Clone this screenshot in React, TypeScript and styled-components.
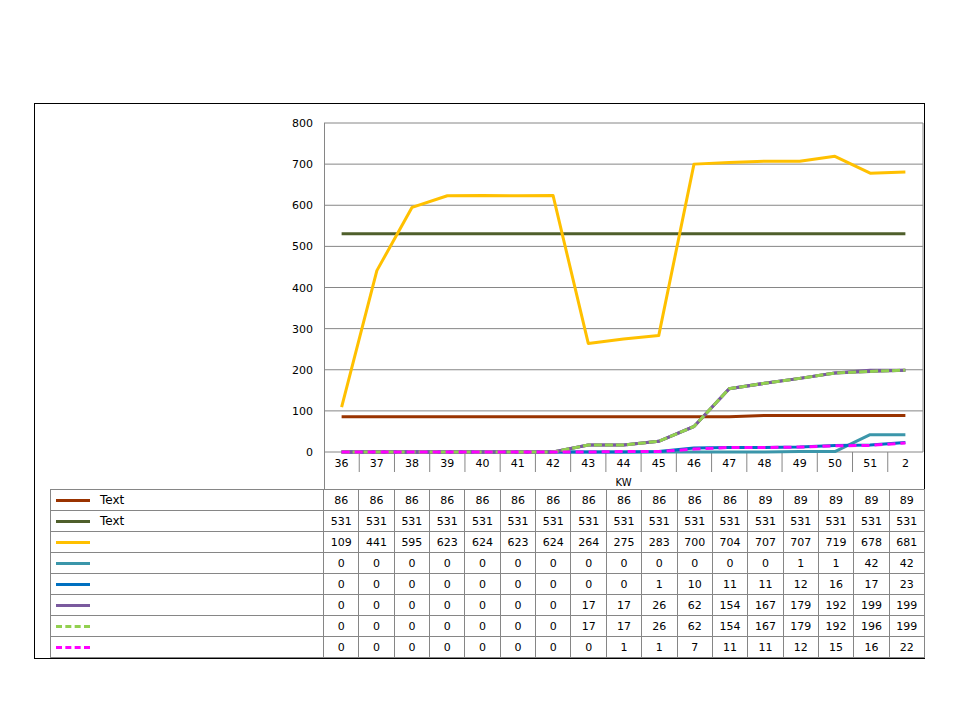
import React from "react"
import styled, { createGlobalStyle } from "styled-components"

const Global = createGlobalStyle`
  body { margin: 0; background: #fff; font-family: "DejaVu Sans", Verdana, sans-serif; }
`

const Frame = styled.div`
  margin: 103px 0 0 34px;
  width: 889px;
  height: 554px;
  border: 1px solid #000;
  display: flex;
  flex-direction: column;
`

const Table = styled.div`
  margin-left: 15px;
  width: 874px;
  display: grid;
  grid-template-columns: 273px repeat(17, 1fr);
  border-top: 1px solid #868686;
  border-left: 1px solid #868686;
`

const Cell = styled.div`
  height: 20px;
  border-right: 1px solid #868686;
  border-bottom: 1px solid #868686;
  font-size: 11px;
  display: flex;
  align-items: center;
  justify-content: center;
  color: #000;
`

const LabelCell = styled(Cell)`
  justify-content: flex-start;
  padding-left: 5px;
  gap: 10px;
  font-size: 12px;
`

const Swatch = styled.span<{ $color: string; $dashed?: boolean }>`
  width: 34px;
  height: 0;
  border-top: 3px ${(p) => (p.$dashed ? "dashed" : "solid")} ${(p) => p.$color};
`

const cats = ["36", "37", "38", "39", "40", "41", "42", "43", "44", "45", "46", "47", "48", "49", "50", "51", "2"]

const series = [
  { color: "#993300", label: "Text", data: [86, 86, 86, 86, 86, 86, 86, 86, 86, 86, 86, 86, 89, 89, 89, 89, 89] },
  { color: "#4f5f2b", label: "Text", data: Array(17).fill(531) },
  { color: "#ffc000", label: "", data: [109, 441, 595, 623, 624, 623, 624, 264, 275, 283, 700, 704, 707, 707, 719, 678, 681] },
  { color: "#3b96aa", label: "", data: [0, 0, 0, 0, 0, 0, 0, 0, 0, 0, 0, 0, 0, 1, 1, 42, 42] },
  { color: "#0070c0", label: "", data: [0, 0, 0, 0, 0, 0, 0, 0, 0, 1, 10, 11, 11, 12, 16, 17, 23] },
  { color: "#7a5a9e", label: "", data: [0, 0, 0, 0, 0, 0, 0, 17, 17, 26, 62, 154, 167, 179, 192, 199, 199] },
  { color: "#92d050", label: "", dashed: true, data: [0, 0, 0, 0, 0, 0, 0, 17, 17, 26, 62, 154, 167, 179, 192, 196, 199] },
  { color: "#ff00ff", label: "", dashed: true, data: [0, 0, 0, 0, 0, 0, 0, 0, 1, 1, 7, 11, 11, 12, 15, 16, 22] },
]

const X0 = 289, X1 = 888, Y0 = 348, Y1 = 19
const cw = (X1 - X0) / 17
const px = (i: number) => X0 + cw * (i + 0.5)
const py = (v: number) => Y0 - (v / 800) * (Y0 - Y1)

const Chart = () => (
  <svg width={889} height={387} style={{ display: "block" }}>
    {[0, 100, 200, 300, 400, 500, 600, 700, 800].map((v) => (
      <g key={v}>
        {v > 0 && <line x1={X0} x2={X1} y1={py(v)} y2={py(v)} stroke="#868686" strokeWidth={1} />}
        <text x={278} y={py(v) + 4} fontSize={11} textAnchor="end" fontFamily="DejaVu Sans">{v}</text>
      </g>
    ))}
    <line x1={X0 + 0.5} x2={X0 + 0.5} y1={Y1} y2={387} stroke="#868686" />
    <line x1={X1} x2={X1} y1={Y1} y2={Y0} stroke="#868686" />
    <line x1={X0} x2={X1} y1={Y0} y2={Y0} stroke="#868686" />
    {cats.map((c, i) => (
      <g key={c}>
        {i > 0 && <line x1={X0 + cw * i} x2={X0 + cw * i} y1={Y0} y2={Y0 + 20} stroke="#868686" />}
        <text x={px(i)} y={Y0 + 15} fontSize={11} textAnchor="middle" fontFamily="DejaVu Sans">{c}</text>
      </g>
    ))}
    <text x={(X0 + X1) / 2} y={382} fontSize={10} textAnchor="middle" fontFamily="DejaVu Sans">KW</text>
    {series.map((s, si) => {
      const pts = s.data.map((v, i) => `${px(i)},${py(v)}`).join(" ")
      if (si === 6)
        return (
          <g key={si}>
            <polyline points={pts} fill="none" stroke="#7a5a9e" strokeWidth={3} />
            <polyline points={pts} fill="none" stroke={s.color} strokeWidth={3} strokeDasharray="8 3" />
          </g>
        )
      return (
        <polyline key={si} points={pts} fill="none" stroke={s.color} strokeWidth={3}
          strokeDasharray={s.dashed ? "8 5" : undefined} strokeLinejoin="round" />
      )
    })}
  </svg>
)

export default function App() {
  return (
    <>
      <Global />
      <Frame>
        <Chart />
        <Table>
          {series.map((s, si) => (
            <React.Fragment key={si}>
              <LabelCell>
                <Swatch $color={s.color} $dashed={s.dashed} />
                {s.label}
              </LabelCell>
              {s.data.map((v, i) => (
                <Cell key={i}>{v}</Cell>
              ))}
            </React.Fragment>
          ))}
        </Table>
      </Frame>
    </>
  )
}
